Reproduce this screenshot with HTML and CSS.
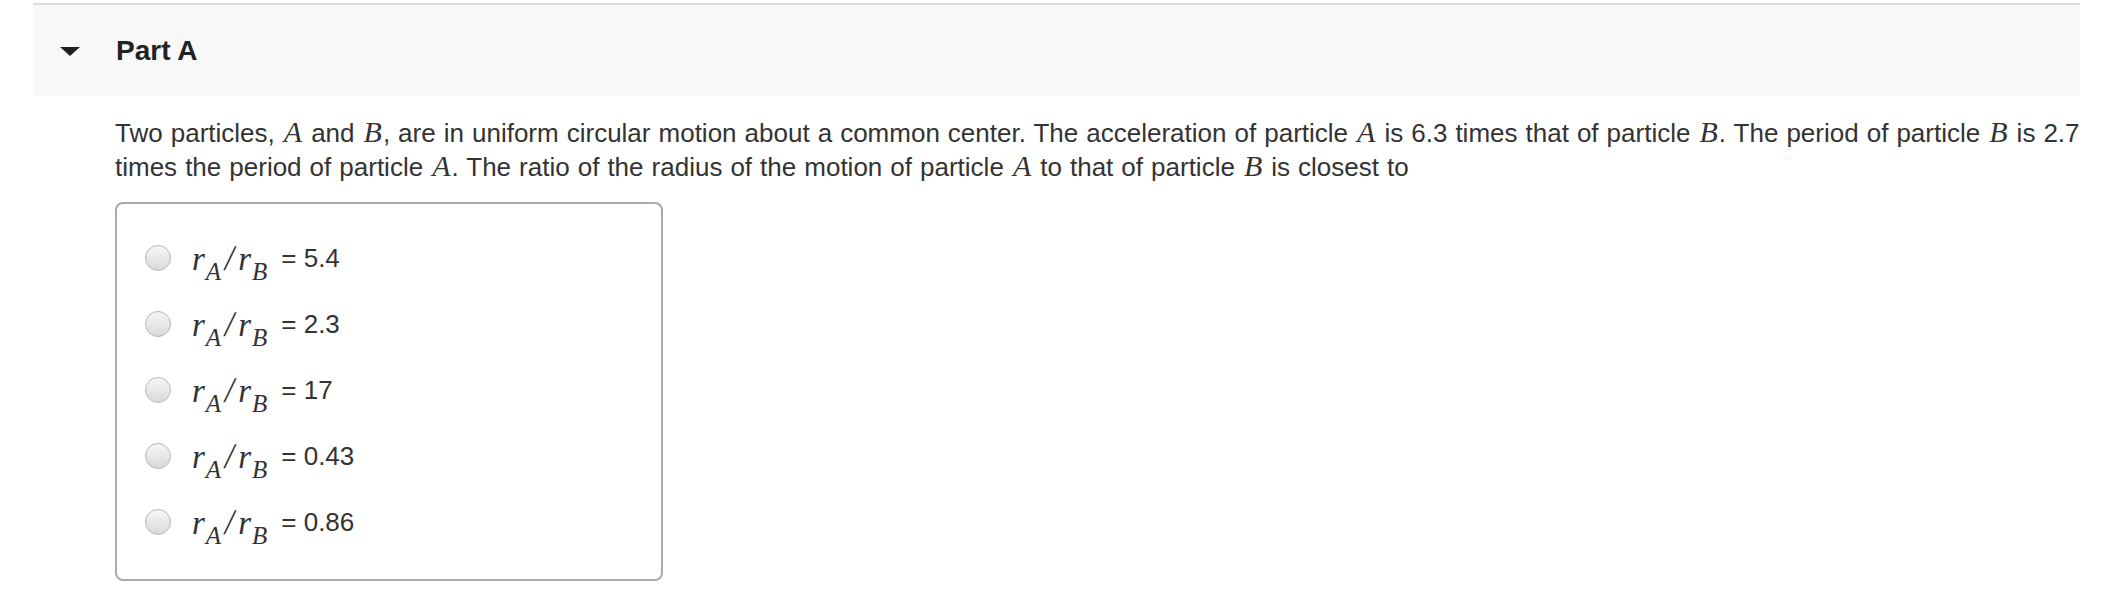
FILE: index.html
```html
<!DOCTYPE html>
<html>
<head>
<meta charset="utf-8">
<link rel="stylesheet" href="styles.css">
</head>
<body>
<div class="part">
  <div class="part-header">
    <span class="caret"></span>
    <span class="part-title">Part A</span>
  </div>
  <div class="part-body">
    <p class="question">Two particles, <span class="mi">A</span> and <span class="mi">B</span>, are in uniform circular motion about a common center. The acceleration of particle <span class="mi">A</span> is 6.3 times that of particle <span class="mi">B</span>. The period of particle <span class="mi">B</span> is 2.7 times the period of particle <span class="mi">A</span>. The ratio of the radius of the motion of particle <span class="mi">A</span> to that of particle <span class="mi">B</span> is closest to</p>
    <div class="choices">
      <label class="choice"><input type="radio" name="q" class="radio"><span class="math"><span class="r">r</span><sub>A</sub><span class="slash">/</span><span class="r">r</span><sub>B</sub></span><span class="val">= 5.4</span></label>
      <label class="choice"><input type="radio" name="q" class="radio"><span class="math"><span class="r">r</span><sub>A</sub><span class="slash">/</span><span class="r">r</span><sub>B</sub></span><span class="val">= 2.3</span></label>
      <label class="choice"><input type="radio" name="q" class="radio"><span class="math"><span class="r">r</span><sub>A</sub><span class="slash">/</span><span class="r">r</span><sub>B</sub></span><span class="val">= 17</span></label>
      <label class="choice"><input type="radio" name="q" class="radio"><span class="math"><span class="r">r</span><sub>A</sub><span class="slash">/</span><span class="r">r</span><sub>B</sub></span><span class="val">= 0.43</span></label>
      <label class="choice"><input type="radio" name="q" class="radio"><span class="math"><span class="r">r</span><sub>A</sub><span class="slash">/</span><span class="r">r</span><sub>B</sub></span><span class="val">= 0.86</span></label>
    </div>
  </div>
</div>
</body>
</html>
```
FILE: styles.css
```css
html, body {
  margin: 0;
  padding: 0;
  background: #ffffff;
}
body {
  font-family: "Liberation Sans", Arial, sans-serif;
  color: #333333;
}
.part {
  margin: 3px 26px 0 33px;
}
.part-header {
  height: 91px;
  border-top: 2px solid #dddddd;
  background: #f8f8f8;
  display: flex;
  align-items: center;
  padding-left: 27px;
}
.caret {
  width: 0;
  height: 0;
  border-left: 10px solid transparent;
  border-right: 10px solid transparent;
  border-top: 9px solid #222222;
  margin-right: 36px;
  margin-top: 2px;
}
.part-title {
  font-weight: bold;
  font-size: 28px;
  color: #222222;
}
.part-body {
  padding-left: 82px;
}
.question {
  margin: 20px -22px 18px 0;
  font-size: 26px;
  line-height: 34px;
  word-spacing: 0.8px;
}
.mi {
  font-family: "Liberation Serif", "Times New Roman", serif;
  font-style: italic;
  font-size: 30px;
  line-height: 0;
  padding: 0 1px;
}
.choices {
  width: 548px;
  height: 379px;
  border: 2px solid #aaaaaa;
  border-radius: 8px;
  padding: 21px 0 24px 28px;
  box-sizing: border-box;
}
.choice {
  display: flex;
  align-items: center;
  height: 66px;
  font-size: 26px;
}
.radio {
  appearance: none;
  -webkit-appearance: none;
  width: 26px;
  height: 26px;
  margin: 0 20px 0 0;
  border-radius: 50%;
  border: 1px solid #b8b8b8;
  background: linear-gradient(#f6f6f6, #d9d9d9);
  box-sizing: border-box;
  flex-shrink: 0;
}
.math {
  display: inline-block;
  font-family: "Liberation Serif", "Times New Roman", serif;
  font-style: italic;
  font-size: 33px;
  line-height: 1;
  white-space: nowrap;
}
.r {
  padding: 0 1px 0 1px;
}
.math sub {
  font-size: 25px;
  vertical-align: -10px;
  line-height: 0;
  margin-right: 4px;
}
.slash {
  display: inline-block;
  font-style: normal;
  font-size: 36px;
  margin: 0 2px 0 0;
  transform: skewX(-8deg);
}
.val {
  margin-left: 10px;
}
```
